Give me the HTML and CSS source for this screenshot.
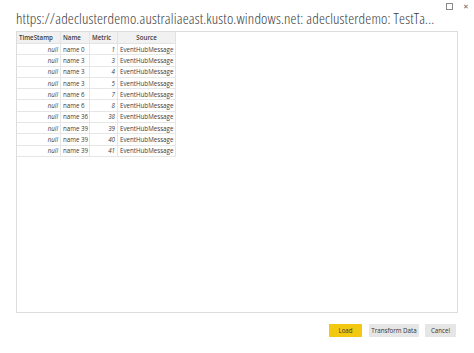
FILE: index.html
```html
<!DOCTYPE html>
<html>
<head>
<meta charset="utf-8">
<link rel="stylesheet" href="styles.css">
</head>
<body>
<div class="dialog">
  <div class="controls">
    <span class="ctl max"></span>
    <span class="ctl close">✕</span>
  </div>
  <h1 class="title">https://adeclusterdemo.australiaeast.kusto.windows.net: adeclusterdemo: TestTa...</h1>
  <div class="panel">
    <table class="grid">
      <thead>
        <tr><th class="c1">TimeStamp</th><th class="c2">Name</th><th class="c3">Metric</th><th class="c4">Source</th></tr>
      </thead>
      <tbody>
        <tr><td class="r"><i>null</i></td><td>name 0</td><td class="r"><i>1</i></td><td>EventHubMessage</td></tr>
        <tr><td class="r"><i>null</i></td><td>name 3</td><td class="r"><i>3</i></td><td>EventHubMessage</td></tr>
        <tr><td class="r"><i>null</i></td><td>name 3</td><td class="r"><i>4</i></td><td>EventHubMessage</td></tr>
        <tr><td class="r"><i>null</i></td><td>name 3</td><td class="r"><i>5</i></td><td>EventHubMessage</td></tr>
        <tr><td class="r"><i>null</i></td><td>name 6</td><td class="r"><i>7</i></td><td>EventHubMessage</td></tr>
        <tr><td class="r"><i>null</i></td><td>name 6</td><td class="r"><i>8</i></td><td>EventHubMessage</td></tr>
        <tr><td class="r"><i>null</i></td><td>name 36</td><td class="r"><i>38</i></td><td>EventHubMessage</td></tr>
        <tr><td class="r"><i>null</i></td><td>name 39</td><td class="r"><i>39</i></td><td>EventHubMessage</td></tr>
        <tr><td class="r"><i>null</i></td><td>name 39</td><td class="r"><i>40</i></td><td>EventHubMessage</td></tr>
        <tr><td class="r"><i>null</i></td><td>name 39</td><td class="r"><i>41</i></td><td>EventHubMessage</td></tr>
      </tbody>
    </table>
  </div>
  <div class="actions">
    <button class="btn primary">Load</button>
    <button class="btn wide">Transform Data</button>
    <button class="btn">Cancel</button>
  </div>
</div>
</body>
</html>
```
FILE: styles.css
```css
html, body {
  margin: 0;
  padding: 0;
  background: #ffffff;
}
body {
  width: 474px;
  height: 353px;
  overflow: hidden;
  font-family: "Open Sans", "Noto Sans", sans-serif;
  color: #333;
}
.dialog {
  position: relative;
  padding: 8px 16px 0 16px;
}
.controls {
  position: absolute;
  top: 2px;
  right: 5px;
  display: flex;
  gap: 10px;
  align-items: center;
  height: 8px;
}
.ctl.max {
  width: 5px;
  height: 5px;
  border: 1px solid #888;
}
.ctl.close {
  font-size: 7px;
  color: #666;
  line-height: 1;
}
.title {
  margin: 0;
  font-family: "Open Sans", Roboto, sans-serif;
  font-size: 15px;
  font-weight: 300;
  font-stretch: 87.5%;
  letter-spacing: 0.16px;
  color: #3a3a3a;
  white-space: nowrap;
  line-height: 20px;
  height: 20px;
}
.panel {
  margin-top: 3px;
  height: 282px;
  border: 1px solid #dcdcdc;
  box-sizing: border-box;
  width: 442px;
}
.grid {
  border-collapse: collapse;
  table-layout: fixed;
  width: 158px;
  font-size: 6.2px;
  color: #3c3c3c;
}
.grid th {
  background: #f1f1f1;
  font-weight: 600;
  text-align: left;
  height: 11px;
  padding: 0 2px;
  border-right: 1px solid #e3e3e3;
  border-bottom: 1px solid #e3e3e3;
}
.grid th.c4 { text-align: center; }
.grid td {
  height: 10.3px;
  padding: 0 2px;
  border-right: 1px solid #e6e6e6;
  border-bottom: 1px solid #e6e6e6;
  white-space: nowrap;
  overflow: hidden;
}
.grid .c1 { width: 39px; }
.grid .c2 { width: 24px; }
.grid .c3 { width: 23px; }
.grid .c4 { width: 53px; }
.grid td.r { text-align: right; }
.actions {
  display: flex;
  justify-content: flex-end;
  gap: 6px;
  margin-top: 11px;
  padding-right: 2px;
}
.btn {
  font-family: "Open Sans", "Noto Sans", sans-serif;
  font-size: 6.2px;
  color: #333;
  background: #e6e6e6;
  border: none;
  height: 13px;
  padding: 0;
  width: 31px;
}
.btn.primary {
  background: #f2c811;
  width: 33px;
  margin-right: 1px;
}
.btn.wide { width: 50px; }
```
